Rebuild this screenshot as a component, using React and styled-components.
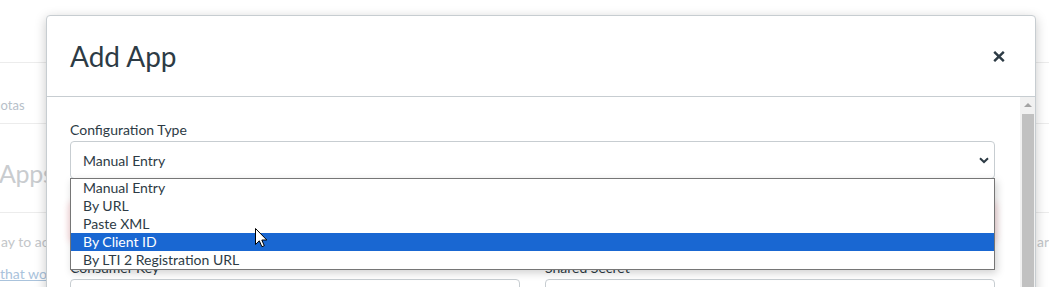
import React from "react";
import styled, { createGlobalStyle } from "styled-components";

const GlobalStyle = createGlobalStyle`
  html, body { margin: 0; padding: 0; }
  body {
    width: 1049px;
    height: 287px;
    overflow: hidden;
    background: #ffffff;
    font-family: Lato, "Noto Sans", sans-serif;
  }
  #root { position: relative; width: 1049px; height: 287px; overflow: hidden; }
`;

/* ---------- faded page behind the dialog ---------- */
const Page = styled.div`
  display: flex;
  flex-direction: column;
  width: 1049px;
`;

const TopBar = styled.div`
  height: 62px;
  border-bottom: 1px solid #ececec;
`;

const NavRow = styled.div`
  height: 28px;
  padding-top: 32px;
  border-bottom: 1px solid #ececec;
  font-size: 13px;
  line-height: 20px;
  color: #b7c0c9;
  white-space: nowrap;
`;

const NavItem = styled.span`
  display: inline-block;
  margin-left: -17px;
`;

const HeadingRow = styled.div`
  height: 55px;
  padding-top: 33px;
  border-bottom: 1px solid #ececec;
  white-space: nowrap;
`;

const PageTitle = styled.h1`
  margin: 0 0 0 -1px;
  font-size: 25px;
  line-height: 1.3;
  font-weight: 400;
  letter-spacing: -0.3px;
  color: #c9cccf;
`;

const Para = styled.div`
  display: flex;
  justify-content: space-between;
  margin-top: ${(p) => p.$mt}px;
  font-size: 14px;
  line-height: 20px;
  color: #c3c6c9;
  white-space: nowrap;
`;

const ParaText = styled.span`
  margin-left: ${(p) => p.$ml || 0}px;
`;

const LinkText = styled.span`
  color: #aac3dc;
  text-decoration: underline;
`;

const RightClip = styled.span`
  width: 12px;
  overflow: hidden;
`;

/* ---------- dialog ---------- */
const Modal = styled.div`
  position: absolute;
  top: 15px;
  left: 46px;
  width: 990px;
  height: 300px;
  box-sizing: border-box;
  background: #ffffff;
  border: 1px solid #c7cdd1;
  border-radius: 4px;
  box-shadow: 0 3px 12px rgba(0, 0, 0, 0.22);
  display: flex;
  flex-direction: column;
  overflow: hidden;
`;

const Header = styled.div`
  height: 80px;
  flex: none;
  border-bottom: 1px solid #c7cdd1;
  display: flex;
  align-items: center;
  justify-content: space-between;
  padding: 0 20px 0 23px;
`;

const Title = styled.h2`
  margin: 0;
  font-size: 28px;
  font-weight: 400;
  color: #2d3b45;
`;

const CloseButton = styled.button`
  width: 32px;
  height: 32px;
  padding: 0;
  border: none;
  background: transparent;
  display: flex;
  align-items: center;
  justify-content: center;
  color: #2d3b45;
`;

const Body = styled.div`
  flex: 1;
  min-height: 0;
  display: flex;
`;

const Content = styled.div`
  flex: 1;
  padding: 23px 25px 0 23px;
  display: flex;
  flex-direction: column;
`;

const ScrollTrack = styled.div`
  width: 15px;
  flex: none;
  background: #f1f1f1;
  display: flex;
  flex-direction: column;
  align-items: center;
`;

const UpArrow = styled.div`
  margin-top: 6px;
  width: 0;
  height: 0;
  border-left: 4px solid transparent;
  border-right: 4px solid transparent;
  border-bottom: 4px solid #a3a3a3;
`;

const Thumb = styled.div`
  margin-top: 7px;
  width: 12px;
  flex: 1;
  background: #c1c1c1;
`;

const Field = styled.div`
  position: relative;
  display: flex;
  flex-direction: column;
  margin-top: ${(p) => p.$mt || 0}px;
`;

const Label = styled.label`
  font-size: 14px;
  line-height: 20px;
  color: #2d3b45;
  margin-bottom: 1px;
  white-space: nowrap;
`;

const SelectBox = styled.div`
  height: 38px;
  box-sizing: border-box;
  border: 1px solid #c7cdd1;
  border-radius: 4px;
  background: #fff;
  display: flex;
  align-items: center;
  justify-content: space-between;
  padding: 0 5px 0 12px;
  font-size: 14px;
  color: #2d3b45;
`;

const Input = styled.div`
  height: 38px;
  box-sizing: border-box;
  border: 1px solid ${(p) => (p.$error ? "#e8868b" : "#c7cdd1")};
  border-radius: 4px;
  background: #fff;
  box-shadow: ${(p) => (p.$error ? "0 0 6px 2px rgba(224, 60, 70, 0.18)" : "none")};
`;

const TwoCols = styled.div`
  display: grid;
  grid-template-columns: 450px 450px;
  column-gap: 25px;
  margin-top: 17px;
`;

const DropList = styled.ul`
  position: absolute;
  top: calc(100% - 1px);
  left: 0;
  right: 0;
  z-index: 2;
  margin: 0;
  padding: 0;
  list-style: none;
  background: #ffffff;
  border: 1px solid #767676;
  box-shadow: 2px 3px 8px rgba(0, 0, 0, 0.18);
`;

const Option = styled.li`
  height: 18px;
  line-height: 18px;
  padding-left: 12px;
  font-size: 14px;
  color: ${(p) => (p.$active ? "#ffffff" : "#2d3b45")};
  background: ${(p) => (p.$active ? "#1967d2" : "transparent")};
  white-space: nowrap;
`;

const Cursor = styled.svg`
  position: absolute;
  left: 184px;
  top: 49px;
  z-index: 3;
`;

const options = [
  "Manual Entry",
  "By URL",
  "Paste XML",
  "By Client ID",
  "By LTI 2 Registration URL",
];

export default function App() {
  return (
    <>
      <GlobalStyle />
      <Page>
        <TopBar />
        <NavRow>
          <NavItem>Quotas</NavItem>
        </NavRow>
        <HeadingRow>
          <PageTitle>Apps</PageTitle>
        </HeadingRow>
        <Para $mt={19}>
          <ParaText $ml={1}>ay to access apps</ParaText>
          <RightClip>are</RightClip>
        </Para>
        <Para $mt={12}>
          <LinkText>that work</LinkText>
        </Para>
      </Page>

      <Modal role="dialog" aria-label="Add App">
        <Header>
          <Title>Add App</Title>
          <CloseButton aria-label="Close">
            <svg width="12" height="11" viewBox="0 0 12 11">
              <path
                d="M1.2 0.8 L10.8 10.2 M10.8 0.8 L1.2 10.2"
                stroke="#2d3b45"
                strokeWidth="2.4"
                fill="none"
              />
            </svg>
          </CloseButton>
        </Header>
        <Body>
          <Content>
            <Field>
              <Label>Configuration Type</Label>
              <SelectBox>
                <span>Manual Entry</span>
                <svg width="10" height="7" viewBox="0 0 10 7">
                  <polyline
                    points="1,1.2 5,5 9,1.2"
                    stroke="#2d3b45"
                    strokeWidth="2"
                    fill="none"
                  />
                </svg>
              </SelectBox>
              <DropList>
                {options.map((o) => (
                  <Option key={o} $active={o === "By Client ID"}>
                    {o}
                  </Option>
                ))}
                <Cursor width="13" height="20" viewBox="0 0 13 20">
                  <path
                    d="M0.5 0.5 L0.5 16.5 L4.3 12.8 L6.9 18.7 L9.3 17.7 L6.8 12 L11.8 12 Z"
                    fill="#ffffff"
                    stroke="#000000"
                    strokeWidth="1"
                    strokeLinejoin="miter"
                  />
                </Cursor>
              </DropList>
            </Field>
            <Field $mt={3}>
              <Label>Name</Label>
              <Input $error />
            </Field>
            <TwoCols>
              <Field>
                <Label>Consumer Key</Label>
                <Input />
              </Field>
              <Field>
                <Label>Shared Secret</Label>
                <Input />
              </Field>
            </TwoCols>
          </Content>
          <ScrollTrack>
            <UpArrow />
            <Thumb />
          </ScrollTrack>
        </Body>
      </Modal>
    </>
  );
}
